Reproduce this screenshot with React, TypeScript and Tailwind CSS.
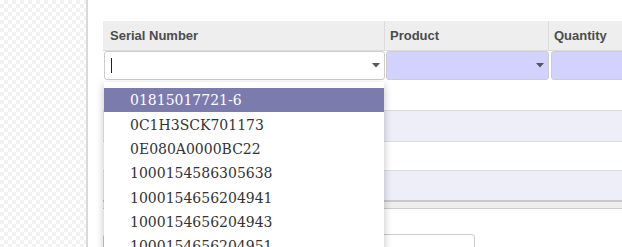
import React from "react";

const items = [
  "01815017721-6",
  "0C1H3SCK701173",
  "0E080A0000BC22",
  "1000154586305638",
  "1000154656204941",
  "1000154656204943",
  "1000154656204951",
];

function Caret() {
  return (
    <svg width="8" height="5" viewBox="0 0 8 5" className="shrink-0">
      <path d="M0 0 L8 0 L4 4.5 Z" fill="#555" />
    </svg>
  );
}

export default function App() {
  return (
    <div className="relative w-[622px] h-[247px] overflow-hidden flex bg-white font-['Liberation_Sans',Arial,sans-serif]">
      <div className="w-[86px] h-full shrink-0 bg-[repeating-conic-gradient(#f1f1f1_0%_25%,#ffffff_0%_50%)] bg-[length:8px_8px]" />
      <div className="w-[2px] h-full shrink-0 bg-[#dadada]" />
      <div className="flex-1 pl-[15px] pt-[21px] min-w-0">
        <div className="w-[560px]">
          {/* header */}
          <div className="flex h-[30px] bg-[#eeeeee] border-b border-[#dcdcdc] text-[13px] font-bold text-[#4c4c4c]">
            <div className="w-[282px] shrink-0 flex items-center pl-[7px] border-r border-[#dcdcdc]">Serial Number</div>
            <div className="w-[164px] shrink-0 flex items-center pl-[5px] border-r border-[#dcdcdc]">Product</div>
            <div className="flex-1 flex items-center pl-[5px]">Quantity</div>
          </div>
          {/* edit row */}
          <div className="flex h-[30px] bg-white">
            <div className="w-[283px] shrink-0 pl-[1px] pr-[1px] pb-[1px]">
              <div className="h-full bg-white border border-[#cccccc] rounded-[3px] flex items-center pl-[6px] pr-[4px]">
                <div className="w-px h-[15px] bg-[#222]" />
                <div className="flex-1" />
                <Caret />
              </div>
            </div>
            <div className="w-[164px] shrink-0 pr-[1px] pb-[1px]">
              <div className="h-full bg-[#d2d2ff] border border-[#cccccc] rounded-[3px] flex items-center justify-end pr-[4px]">
                <Caret />
              </div>
            </div>
            <div className="flex-1 pl-[1px] pb-[1px]">
              <div className="h-full bg-[#d2d2ff] border border-[#cccccc] rounded-[3px]" />
            </div>
          </div>
          <div className="h-[30px] bg-white border-b border-[#dddddd]" />
          <div className="h-[31px] bg-[#eeeef8] border-b border-[#dddddd]" />
          <div className="h-[29px] bg-white border-b border-[#dddddd]" />
          <div className="h-[29px] bg-[#eeeef8]" />
          <div className="h-[9px] bg-[#eeeeee] border-t-2 border-b border-t-[#c9c9c9] border-b-[#cccccc]" />
          <div className="h-[25px]" />
          <div className="w-[372px] h-[30px] border border-[#cccccc] rounded-[3px]" />
        </div>
      </div>

      {/* dropdown */}
      <div className="absolute left-[104px] top-[82px] w-[280px] h-[180px] bg-white pt-[6px] shadow-[0_3px_8px_rgba(0,0,0,0.25)] font-['DejaVu_Serif',Georgia,serif] text-[14px] text-[#333]">
        {items.map((t, i) => (
          <div
            key={t}
            className={
              i === 0
                ? "h-[24px] flex items-center pl-[26px] bg-[#7c7bad] text-white"
                : "h-[24.3px] flex items-center pl-[26px] pt-[2px]"
            }
          >
            {t}
          </div>
        ))}
      </div>
    </div>
  );
}
